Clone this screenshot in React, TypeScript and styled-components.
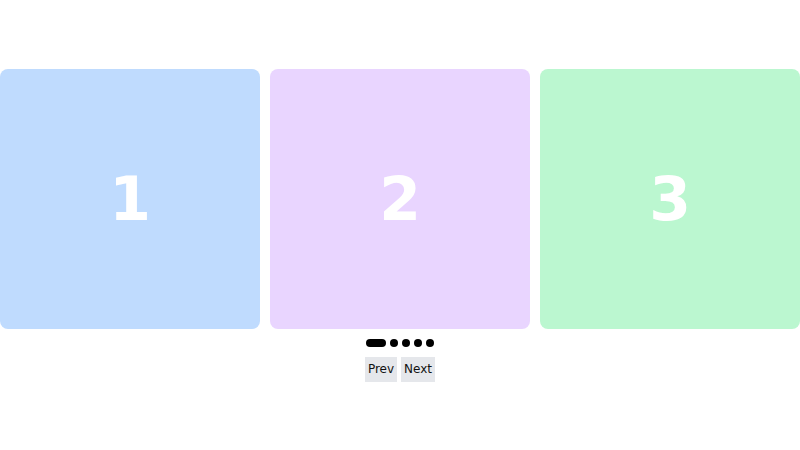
import React, { useState } from "react";
import styled, { createGlobalStyle } from "styled-components";

const Global = createGlobalStyle`
  html, body { margin: 0; padding: 0; background: #ffffff; }
  body { font-family: "DejaVu Sans", sans-serif; }
  * { box-sizing: border-box; }
`;

const Page = styled.div`
  width: 800px;
  height: 450px;
  display: flex;
  flex-direction: column;
  align-items: center;
  justify-content: center;
  gap: 10px;
`;

const Track = styled.div`
  width: 800px;
  display: flex;
  gap: 10px;
`;

const Slide = styled.div<{ $bg: string }>`
  flex: 0 0 260px;
  height: 260px;
  border-radius: 8px;
  background: ${(p) => p.$bg};
  display: flex;
  align-items: center;
  justify-content: center;
  color: #ffffff;
  font-family: "DejaVu Sans", sans-serif;
  font-weight: 700;
  font-size: 60px;
  line-height: 1;
`;

const Dots = styled.div`
  display: flex;
  gap: 4px;
  height: 8px;
`;

const Dot = styled.button<{ $active: boolean }>`
  border: none;
  padding: 0;
  height: 8px;
  width: ${(p) => (p.$active ? "20px" : "8px")};
  border-radius: 4px;
  background: #000000;
  cursor: pointer;
`;

const Controls = styled.div`
  display: flex;
  gap: 4px;
`;

const NavButton = styled.button`
  border: none;
  background: #e5e7eb;
  color: #111111;
  font-family: "DejaVu Sans", sans-serif;
  font-size: 12px;
  line-height: 15px;
  padding: 5px 3px;
  cursor: pointer;
`;

const slides = [
  { n: "1", bg: "#bfdbfe" },
  { n: "2", bg: "#e9d5ff" },
  { n: "3", bg: "#bbf7d0" },
];

export default function App() {
  const [index, setIndex] = useState(0);
  return (
    <>
      <Global />
      <Page>
        <Track>
          {slides.map((s) => (
            <Slide key={s.n} $bg={s.bg}>
              {s.n}
            </Slide>
          ))}
        </Track>
        <Dots>
          {[0, 1, 2, 3, 4].map((i) => (
            <Dot key={i} $active={i === index} onClick={() => setIndex(i)} aria-label={`Go to slide ${i + 1}`} />
          ))}
        </Dots>
        <Controls>
          <NavButton onClick={() => setIndex((i) => Math.max(0, i - 1))}>Prev</NavButton>
          <NavButton onClick={() => setIndex((i) => Math.min(4, i + 1))}>Next</NavButton>
        </Controls>
      </Page>
    </>
  );
}
